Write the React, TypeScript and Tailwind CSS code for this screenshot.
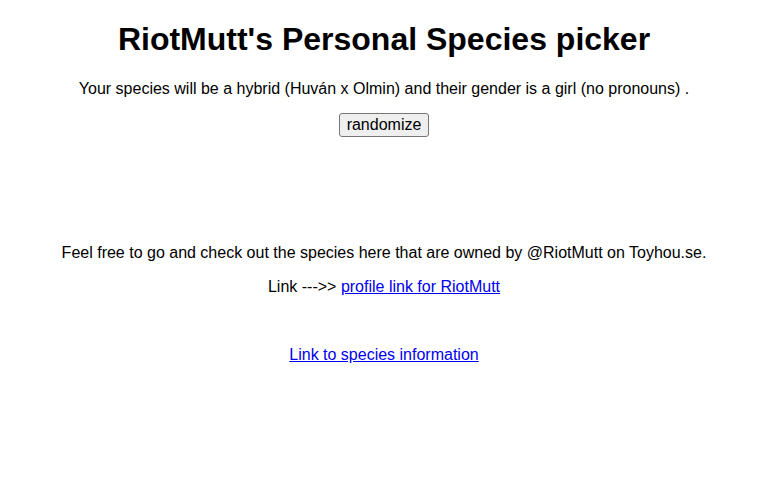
export default function App() {
  return (
    <main className="min-h-[480px] bg-white text-center text-black font-['Liberation_Sans',Arial,sans-serif]">
      <h1 className="pt-[21px] text-[32px] font-bold leading-[37px]">
        RiotMutt's Personal Species picker
      </h1>

      <p className="mt-[22px] text-base leading-[18px]">
        Your species will be a hybrid (Huván x Olmin) and their gender is a girl (no pronouns) .
      </p>

      <div className="mt-[15px]">
        <button className="h-[24px] rounded-[3px] border border-[#767676] bg-[#efefef] px-[7px] text-base leading-[18px] text-black">
          randomize
        </button>
      </div>

      <p className="mt-[107px] text-base leading-[18px]">
        Feel free to go and check out the species here that are owned by @RiotMutt on Toyhou.se.
      </p>

      <p className="mt-[16px] text-base leading-[18px]">
        Link ---&gt;&gt;{" "}
        <a href="#" className="text-[#0000ee] underline">
          profile link for RiotMutt
        </a>
      </p>

      <p className="mt-[50px] text-base leading-[18px]">
        <a href="#" className="text-[#0000ee] underline">
          Link to species information
        </a>
      </p>
    </main>
  );
}
